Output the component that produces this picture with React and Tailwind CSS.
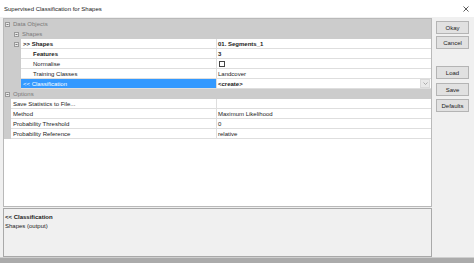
import React from "react";

const GRAY = "bg-[#cccccc]";

function Minus() {
  return (
    <svg width="5" height="5" viewBox="0 0 5 5" className="shrink-0">
      <rect x="0.5" y="0.5" width="4" height="4" fill="#e8e8e8" stroke="#9a9a9a" strokeWidth="1" />
      <line x1="1.5" y1="2.5" x2="3.5" y2="2.5" stroke="#7a7a7a" strokeWidth="1" />
    </svg>
  );
}

function Category({ label, level }) {
  return (
    <div className={`flex h-[10px] items-center ${GRAY}`}>
      <div className={level === 0 ? "pl-[1px]" : "pl-[10px]"}>
        <Minus />
      </div>
      <span className="ml-[3px] text-[#7a7a7a]">{label}</span>
    </div>
  );
}

function Row({ margin = "w-[17px]", nameW = "w-[196px]", icon, name, nameBold, namePad = "pl-[2px]", value, valueBold, selected, dropdown, last }) {
  const line = last ? "" : "border-b border-[#dedede]";
  return (
    <div className="flex h-[10px]">
      <div className={`${margin} ${GRAY} flex items-center ${icon ? "pl-[10px]" : ""} shrink-0`}>{icon ? <Minus /> : null}</div>
      <div
        className={`${nameW} shrink-0 flex items-center border-r border-[#dedede] ${line} ${namePad} ${
          selected ? "bg-[#3399ff] text-white" : "bg-white text-[#1a1a1a]"
        } ${nameBold ? "font-bold" : ""}`}
      >
        <span className="whitespace-nowrap">{name}</span>
      </div>
      <div className={`flex-1 flex items-center bg-white ${line} pl-[1px] ${valueBold ? "font-bold" : ""} text-[#1a1a1a]`}>
        {value}
        {dropdown ? (
          <div className="ml-auto mr-[1px] w-[10px] h-[9px] bg-[#e9e9e9] border border-[#dadada] flex items-center justify-center">
            <svg width="5" height="3" viewBox="0 0 5 3">
              <polyline points="0.5,0.5 2.5,2.5 4.5,0.5" fill="none" stroke="#9a9a9a" strokeWidth="0.8" />
            </svg>
          </div>
        ) : null}
      </div>
    </div>
  );
}

function Btn({ children }) {
  return (
    <div className="w-[33px] h-[13px] bg-[#e1e1e1] border border-[#b4b4b4] flex items-center justify-center text-[#222]">
      {children}
    </div>
  );
}

export default function App() {
  return (
    <div
      className="w-[474px] h-[263px] bg-[#f0f0f0] flex flex-col overflow-hidden text-[6px] leading-none"
      style={{ fontFamily: '"Liberation Sans", Arial, sans-serif' }}
    >
      {/* Title bar */}
      <div className="h-[17px] bg-white flex items-center pl-[4px] pr-[5px] shrink-0">
        <span className="text-[#1a1a1a]">Supervised Classification for Shapes</span>
        <svg className="ml-auto" width="6" height="6" viewBox="0 0 6 6">
          <line x1="0.5" y1="0.5" x2="5.5" y2="5.5" stroke="#333" strokeWidth="0.8" />
          <line x1="5.5" y1="0.5" x2="0.5" y2="5.5" stroke="#333" strokeWidth="0.8" />
        </svg>
      </div>

      <div className="flex flex-1 min-h-0">
        {/* Left */}
        <div className="w-[429px] ml-[3px] flex flex-col pt-[1px]">
          <div className="h-[189px] border border-[#b9b9b9] bg-white flex flex-col">
            <Category label="Data Objects" level={0} />
            <Category label="Shapes" level={1} />
            <Row icon name=">> Shapes" nameBold value="01. Segments_1" valueBold />
            <Row name="Features" nameBold namePad="pl-[12px]" value="3" valueBold />
            <Row
              name="Normalise"
              namePad="pl-[12px]"
              value={<div className="w-[6px] h-[6px] border border-[#444] bg-white ml-[1px]" />}
            />
            <Row name="Training Classes" namePad="pl-[12px]" value="Landcover" />
            <Row name="<< Classification" selected value="<create>" valueBold dropdown />
            <Category label="Options" level={0} />
            <Row margin="w-[7px]" nameW="w-[206px]" name="Save Statistics to File..." value="" />
            <Row margin="w-[7px]" nameW="w-[206px]" name="Method" value="Maximum Likelihood" />
            <Row margin="w-[7px]" nameW="w-[206px]" name="Probability Threshold" value="0" />
            <Row margin="w-[7px]" nameW="w-[206px]" name="Probability Reference" value="relative" />
          </div>
          <div className="mt-[1px] h-[49px] border border-[#a9a9a9] bg-[#f0f0f0] pl-[1px] pt-[5px] flex flex-col gap-[3px] text-[#1a1a1a]">
            <span className="font-bold">&lt;&lt; Classification</span>
            <span>Shapes (output)</span>
          </div>
        </div>

        {/* Right buttons */}
        <div className="flex-1 flex flex-col pl-[4px] pt-[4px]">
          <Btn>Okay</Btn>
          <div className="mt-[2px]">
            <Btn>Cancel</Btn>
          </div>
          <div className="mt-[17px]">
            <Btn>Load</Btn>
          </div>
          <div className="mt-[4px]">
            <Btn>Save</Btn>
          </div>
          <div className="mt-[3px]">
            <Btn>Defaults</Btn>
          </div>
        </div>
      </div>

      {/* bottom strip */}
      <div className="h-[6px] shrink-0 bg-[#ababab] border-t border-[#cfcfcf]" />
    </div>
  );
}
